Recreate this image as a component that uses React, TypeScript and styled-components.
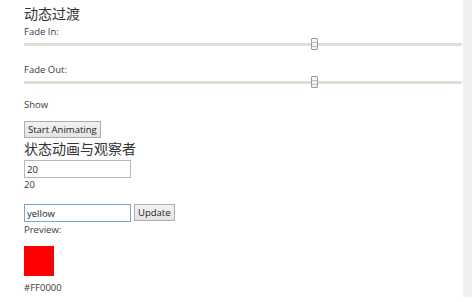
import React, { useState } from 'react';
import styled, { createGlobalStyle } from 'styled-components';

const GlobalStyle = createGlobalStyle`
  html, body {
    margin: 0;
    padding: 0;
    background: #ffffff;
  }
  body {
    font-family: "Open Sans", "Noto Sans CJK SC", sans-serif;
    color: #3a3a3a;
  }
`;

const Page = styled.div`
  display: flex;
  width: 474px;
  height: 302px;
  overflow: hidden;
`;

const Main = styled.div`
  flex: 1;
  display: flex;
  flex-direction: column;
  padding: 3px 1px 0 24px;
`;

const Gutter = styled.div`
  width: 9px;
  height: 297px;
  margin-right: 2px;
  background: #f0f0f0;
`;

const Title = styled.h2`
  margin: 0;
  font-family: "Noto Sans CJK SC", "Noto Sans", sans-serif;
  font-weight: 400;
  font-size: 14px;
  line-height: 20px;
  color: #333;
`;

const Label = styled.div<{ $top?: number }>`
  font-size: 9.5px;
  line-height: 12px;
  color: #3a3a3a;
  margin-top: ${({ $top }) => $top ?? 0}px;
`;

const Range = styled.input.attrs({ type: 'range' })<{ $top: number }>`
  -webkit-appearance: none;
  appearance: none;
  width: 100%;
  height: 13px;
  margin: ${({ $top }) => $top}px 0 0;
  background: transparent;

  &::-webkit-slider-runnable-track {
    height: 3px;
    background: #e3ddd6;
    border: none;
  }

  &::-webkit-slider-thumb {
    -webkit-appearance: none;
    width: 7px;
    height: 12px;
    margin-top: -5px;
    box-sizing: border-box;
    border: 1px solid #9c9c9c;
    border-radius: 1px;
    background: repeating-linear-gradient(
      to bottom,
      #f4f4f4 0px,
      #f4f4f4 3px,
      #bdbdbd 3px,
      #bdbdbd 4px
    );
  }
`;

const Button = styled.button<{ $top?: number }>`
  align-self: flex-start;
  font-family: "Open Sans", sans-serif;
  font-size: 9.5px;
  line-height: 12px;
  color: #222;
  padding: 1px 3px;
  margin-top: ${({ $top }) => $top ?? 0}px;
  background: linear-gradient(#f2f2f2, #e4e4e4);
  border: 1px solid #adadad;
  border-radius: 0;
  height: 17px;
`;

const TextInput = styled.input<{ $focus?: boolean; $top?: number }>`
  box-sizing: border-box;
  width: 107px;
  height: 18px;
  padding: 0 2px;
  margin: ${({ $top }) => $top ?? 0}px 0 0;
  font-family: "Open Sans", sans-serif;
  font-size: 9.5px;
  color: #222;
  border: 1px solid ${({ $focus }) => ($focus ? '#7ea4d6' : '#b7b7b7')};
  outline: none;
`;

const Row = styled.div`
  display: flex;
  align-items: center;
  gap: 3px;
  margin-top: 13px;
`;

const Swatch = styled.div<{ $color: string }>`
  width: 30px;
  height: 30px;
  background: ${({ $color }) => $color};
  margin-top: 10px;
`;

export default function App() {
  const [fadeIn, setFadeIn] = useState(2);
  const [fadeOut, setFadeOut] = useState(2);
  const [num, setNum] = useState('20');
  const [color, setColor] = useState('yellow');

  return (
    <Page>
      <GlobalStyle />
      <Main>
        <Title>动态过渡</Title>
        <Label $top={3}>Fade In:</Label>
        <Range $top={0} min={0} max={3} step={0.1} value={fadeIn} onChange={(e) => setFadeIn(+e.target.value)} />
        <Label $top={13}>Fade Out:</Label>
        <Range $top={0} min={0} max={3} step={0.1} value={fadeOut} onChange={(e) => setFadeOut(+e.target.value)} />
        <Label $top={10}>Show</Label>
        <Button $top={10}>Start Animating</Button>
        <Title>状态动画与观察者</Title>
        <TextInput $top={2} value={num} onChange={(e) => setNum(e.target.value)} />
        <Label $top={1}>{num}</Label>
        <Row>
          <TextInput $focus value={color} onChange={(e) => setColor(e.target.value)} />
          <Button>Update</Button>
        </Row>
        <Label $top={2}>Preview:</Label>
        <Swatch $color="#FF0000" />
        <Label $top={6}>#FF0000</Label>
      </Main>
      <Gutter />
    </Page>
  );
}
